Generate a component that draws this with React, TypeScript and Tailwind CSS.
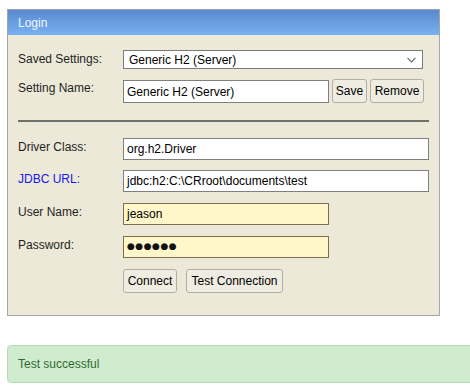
import React from "react";

const font = { fontFamily: '"Liberation Sans", Arial, sans-serif' };

function Label({ children, blue }: { children: React.ReactNode; blue?: boolean }) {
  return (
    <div className={`w-[105px] shrink-0 text-[12px] leading-[14px] ${blue ? "text-[#1717ee]" : "text-[#1e1e1e]"}`}>
      {children}
    </div>
  );
}

function Field({ value, w, yellow, h = "h-[22px]" }: { value: string; w: string; yellow?: boolean; h?: string }) {
  return (
    <div
      className={`${w} ${h} flex items-center pl-[3px] text-[12px] text-black border ${
        yellow ? "bg-[#fff6c9] border-[#7d6f50]" : "bg-white border-[#7f7f7f]"
      }`}
    >
      {value}
    </div>
  );
}

function Btn({ children, w }: { children: React.ReactNode; w: string }) {
  return (
    <div
      className={`${w} h-[24px] flex items-center justify-center text-[12px] text-black bg-[#efece1] border border-[#b0aea6] rounded-[3px]`}
    >
      {children}
    </div>
  );
}

export default function App() {
  return (
    <div className="w-[470px] h-[387px] overflow-hidden bg-white pt-[9px] pl-[7px]" style={font}>
      <div className="w-[433px] border border-[#a6a6a6] bg-[#ece9d8]">
        <div className="h-[25px] flex items-center pl-[10px] text-[12px] text-[#f4f7ff] bg-gradient-to-b from-[#5a89cf] to-[#78b1f1]">
          Login
        </div>
        <div className="px-[10px] pt-[15px] pb-[22px]">
          {/* Saved settings */}
          <div className="flex items-start h-[19px]">
            <div className="pt-[2px]">
              <Label>Saved Settings:</Label>
            </div>
            <div className="w-[300px] h-[19px] bg-white border border-[#7a7a7a] flex items-center justify-between pl-[5px] pr-[6px] text-[12px] text-black">
              <span>Generic H2 (Server)</span>
              <svg width="9" height="6" viewBox="0 0 9 6">
                <path d="M0.5 0.8 L4.5 4.8 L8.5 0.8" fill="none" stroke="#6a6a6a" strokeWidth="1.2" />
              </svg>
            </div>
          </div>
          {/* Setting name */}
          <div className="flex items-start mt-[10px] h-[24px]">
            <div className="pt-[2px]">
              <Label>Setting Name:</Label>
            </div>
            <div className="mt-[1px]">
              <Field value="Generic H2 (Server)" w="w-[206px]" h="h-[23px]" />
            </div>
            <div className="ml-[3px]">
              <Btn w="w-[35px]">Save</Btn>
            </div>
            <div className="ml-[3px]">
              <Btn w="w-[54px]">Remove</Btn>
            </div>
          </div>
          {/* separator */}
          <div className="mt-[17px] h-[2px] bg-[#6f6f6c]" />
          {/* driver */}
          <div className="flex items-start mt-[16px]">
            <div className="pt-[2px]">
              <Label>Driver Class:</Label>
            </div>
            <Field value="org.h2.Driver" w="w-[306px]" />
          </div>
          <div className="flex items-start mt-[10px]">
            <div className="pt-[2px]">
              <Label blue>JDBC URL:</Label>
            </div>
            <Field value="jdbc:h2:C:\CRroot\documents\test" w="w-[306px]" />
          </div>
          <div className="flex items-start mt-[11px]">
            <div className="pt-[2px]">
              <Label>User Name:</Label>
            </div>
            <Field value="jeason" w="w-[206px]" yellow />
          </div>
          <div className="flex items-start mt-[11px]">
            <div className="pt-[2px]">
              <Label>Password:</Label>
            </div>
            <div className="w-[206px] h-[22px] flex items-center pl-[3px] bg-[#fff6c9] border border-[#7d6f50] text-[9px] text-[#111] tracking-[0.5px]" style={{ fontFamily: '"DejaVu Sans", sans-serif' }}>
              ●●●●●●
            </div>
          </div>
          <div className="flex mt-[11px] pl-[105px] gap-[9px]">
            <Btn w="w-[54px]">Connect</Btn>
            <Btn w="w-[97px]">Test Connection</Btn>
          </div>
        </div>
      </div>
      <div className="mt-[29px] w-[480px] h-[38px] flex items-center pl-[10px] bg-[#cfeccf] border border-[#b7dcb7] rounded-[4px] text-[12px] text-[#2f6a2f]">
        Test successful
      </div>
    </div>
  );
}
